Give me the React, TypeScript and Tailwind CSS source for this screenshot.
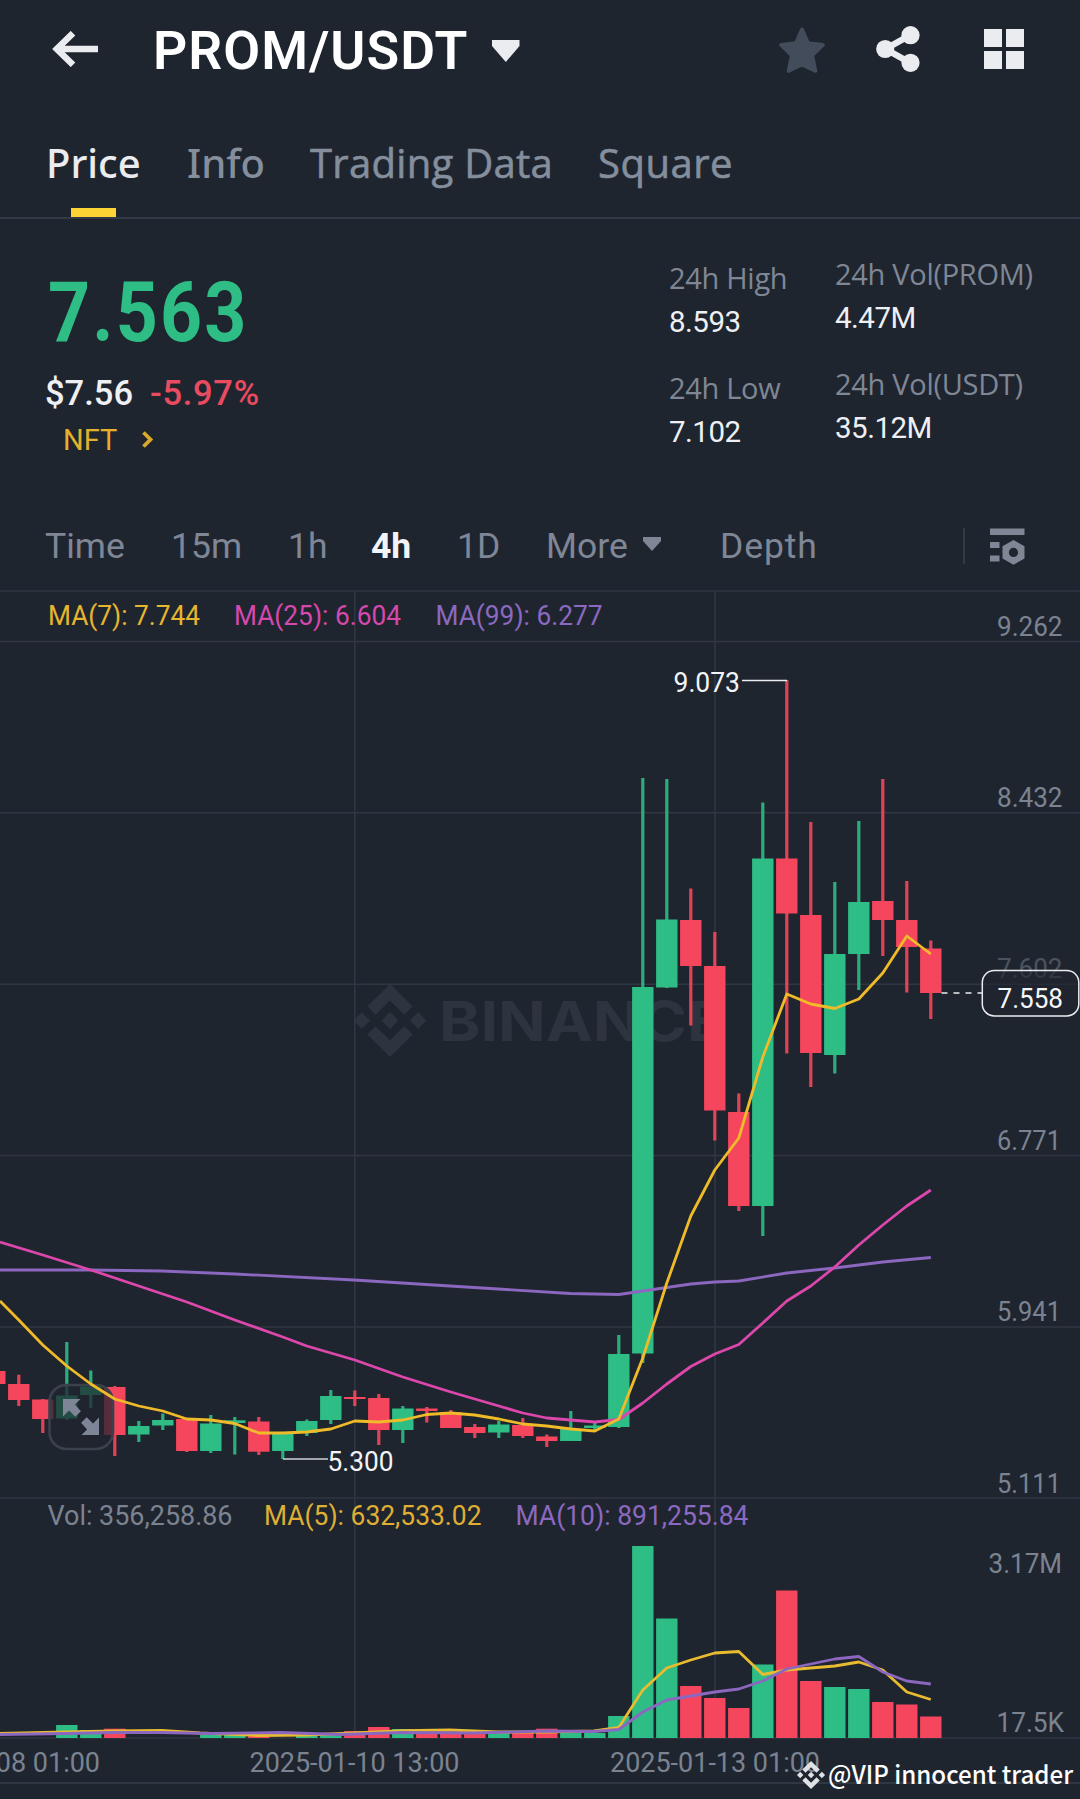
import clsx from "clsx";

type Candle = [number, number, number, number, boolean];

// [high, body top, body bottom, low, rising] in chart pixels, one entry per 4h candle
const CANDLES: Candle[] = [
  [1371, 1371, 1384, 1384, false],
  [1374.7, 1384, 1400, 1406, false],
  [1399, 1399.5, 1419, 1433, false],
  [1342, 1395.5, 1418.5, 1420, true],
  [1370.5, 1386.5, 1395, 1408, true],
  [1386, 1387, 1435, 1456, false],
  [1421, 1426, 1434.5, 1442, true],
  [1413.5, 1420, 1425.5, 1430, true],
  [1418, 1419, 1451, 1452, false],
  [1415, 1423.5, 1451, 1453, true],
  [1417, 1420.3, 1423, 1454.5, true],
  [1417, 1421.5, 1451.7, 1455, false],
  [1433, 1433, 1451, 1459, true],
  [1419.5, 1421, 1433, 1436, true],
  [1390, 1396, 1420, 1424, true],
  [1390.5, 1397, 1399, 1406, false],
  [1394, 1398, 1430, 1445, false],
  [1406, 1408.5, 1430, 1443, true],
  [1407, 1408.5, 1411, 1422.5, false],
  [1410, 1412, 1428, 1428, false],
  [1424, 1427, 1433, 1438, false],
  [1421, 1424.5, 1432.5, 1438, true],
  [1418, 1425, 1436, 1438, false],
  [1434.5, 1436.5, 1441, 1447, false],
  [1411, 1429, 1441, 1441, true],
  [1423, 1425.5, 1428, 1431, true],
  [1335, 1354, 1427, 1428, true],
  [778, 987, 1353.5, 1363, true],
  [779, 919.5, 987.5, 988, true],
  [888.5, 920, 966, 1025.5, false],
  [932, 966, 1110.5, 1140.5, false],
  [1093.5, 1112, 1206, 1211, false],
  [802.5, 858.5, 1206, 1236, true],
  [680, 858.5, 913.5, 1053.5, false],
  [822, 915, 1053, 1087, false],
  [882, 954, 1055, 1073.5, true],
  [821, 902, 954, 990, true],
  [779, 901, 920, 956, false],
  [881, 920, 947, 992.5, false],
  [940.5, 948.5, 993, 1019, false],
];

const VOLUME_TOPS = [
  1738, 1738, 1738, 1725, 1730, 1728.7, 1738, 1738, 1738, 1735, 1735, 1736, 1738, 1735, 1735, 1731, 1727, 1729, 1733,
  1733, 1733, 1733, 1733, 1728.7, 1733, 1733, 1716, 1546, 1618.5, 1686, 1698, 1708, 1664.5, 1590.5, 1681, 1687, 1689,
  1702, 1704.5, 1716.5,
];

const MA7 =
  "0,1301 18.8,1320 42.8,1345 66.8,1366 90.8,1384 114.8,1399 138.8,1406 162.8,1411 186.8,1419 210.8,1420 234.8,1423.5 258.8,1433 282.8,1433 306.8,1432 330.8,1429 354.8,1421 378.8,1422 402.8,1420 426.8,1414.5 450.8,1413 474.8,1415 498.8,1419 522.8,1424 546.8,1426 570.8,1429 594.8,1431 618.8,1419 642.8,1358 666.8,1283 690.8,1216 714.8,1170 738.8,1138 762.8,1057 786.8,994 810.8,1004 834.8,1008.5 858.8,999 882.8,973 906.8,936 930.8,954";
const MA25 =
  "0,1242 42.8,1255 90.8,1270 138.8,1286 186.8,1302 234.8,1320 282.8,1337 306.8,1346 354.8,1360 402.8,1377 450.8,1392 498.8,1406 522.8,1413 546.8,1418 570.8,1420 594.8,1422 618.8,1419.5 642.8,1403 666.8,1384 690.8,1366.5 714.8,1354 738.8,1344.5 762.8,1323 786.8,1301 810.8,1286 834.8,1267 858.8,1245 882.8,1225 906.8,1206 930.8,1190";
const MA99 =
  "0,1270 90,1270 162,1271 235,1274 354,1280 450,1286 570,1293.5 618.8,1294.5 642.8,1291 690.8,1284 714.8,1282 738.8,1281 786.8,1273 834.8,1268 882.8,1262 930.8,1257.5";
const VOL_MA5 =
  "0,1733.5 66,1732 114,1731 162,1730.5 200,1733 258,1735.5 306,1735 354,1733 402,1730.7 450,1730 498,1732 546,1732 594,1731 618.8,1727.5 642.8,1690 666.8,1668 690.8,1660 714.8,1653 738.8,1651.5 762.8,1674.5 786.8,1670 834.8,1666 858.8,1662 882.8,1670 906.8,1692 930.8,1699.5";
const VOL_MA10 =
  "0,1734.5 66,1733.5 114,1732.5 162,1732.5 210,1733.5 280,1732.5 340,1734.5 402,1732.5 474,1733 546,1731 594,1731.5 618.8,1729.5 642.8,1712 666.8,1700 690.8,1696 714.8,1692 738.8,1689 762.8,1681 786.8,1669 834.8,1659 858.8,1656.5 882.8,1672 906.8,1681 930.8,1684";

const GREEN = "#2ebd85";
const RED = "#f6465d";
const STEP = 24;
const centerOf = (i: number) => i * STEP - 5.2;

type LabelProps = { x: number; y: number; w: number; fill: string; children: string };

// Chart text with its left edge at x, its baseline at y and a fixed run length
function Label({ x, y, w, fill, children }: LabelProps) {
  return (
    <text
      x={x - 1.5}
      y={y}
      fill={fill}
      fontSize={27}
      textLength={w + 2.5}
      lengthAdjust="spacingAndGlyphs"
      className="font-[Roboto,sans-serif]"
    >
      {children}
    </text>
  );
}

function BinanceMark() {
  return (
    <path d="M7.3 10.1 12 5.4l4.7 4.7 2.75-2.75L12 0 4.55 7.35zM0 12l2.73-2.73L5.46 12l-2.73 2.73zM7.3 13.9 12 18.6l4.7-4.7 2.75 2.74L12 24l-7.45-7.36zM18.54 12l2.73-2.73L24 12l-2.73 2.73zM14.77 12 12 9.22 9.23 12 12 14.78z" />
  );
}

function PriceChart() {
  return (
    <svg width="1080" height="1207" viewBox="0 592 1080 1207" className="block shrink-0">
      <g fill="#2e343f">
        <g transform="translate(353.5 984) scale(3.04)">
          <BinanceMark />
        </g>
        <text
          x="439"
          y="1040.5"
          fontSize="55.5"
          fontWeight="700"
          textLength="286"
          lengthAdjust="spacingAndGlyphs"
          className="font-[Inter,sans-serif]"
        >
          BINANCE
        </text>
      </g>

      <g stroke="#303743" strokeWidth="1.6">
        {[641.5, 812.8, 984.3, 1155.5, 1327, 1498].map((y) => (
          <line key={y} x1="0" x2="1080" y1={y} y2={y} />
        ))}
        <line x1="354.8" x2="354.8" y1="592" y2="1738" />
        <line x1="715" x2="715" y1="592" y2="1738" />
        <line x1="0" x2="1080" y1="1738" y2="1738" />
        <line x1="0" x2="1080" y1="1783" y2="1783" strokeWidth="2" />
      </g>

      {CANDLES.map(([high, top, bottom, low, up], i) => (
        <g key={i} fill={up ? GREEN : RED}>
          <rect x={centerOf(i) - 1.6} y={high} width="3.2" height={low - high} opacity="0.9" />
          <rect x={centerOf(i) - 10.7} y={top} width="21.4" height={bottom - top} />
          <rect x={centerOf(i) - 10.7} y={VOLUME_TOPS[i]} width="21.4" height={1738 - VOLUME_TOPS[i]} />
        </g>
      ))}

      {/* fullscreen button */}
      <rect x="49.5" y="1385" width="63.5" height="64" rx="17" fill="#1f252f" fillOpacity="0.74" stroke="#3a414d" strokeWidth="2.6" />
      <g fill="#7d8596">
        <path d="M63 1399h17.5l-5.6 5.6 6 6.6-5.6 5.6-6.3-6.4-6 6z" />
        <path d="M99 1435H81.5l5.6-5.6-6-6.6 5.6-5.6 6.3 6.4 6-6z" />
      </g>

      <g fill="none" strokeWidth="2.8" strokeLinejoin="round">
        <polyline points={MA99} stroke="#8b67c0" />
        <polyline points={MA25} stroke="#dc47ab" />
        <polyline points={MA7} stroke="#f0bb28" />
        <polyline points={VOL_MA5} stroke="#e8bb30" />
        <polyline points={VOL_MA10} stroke="#8b67c0" />
      </g>

      <Label x={49.5} y={625} w={149.5} fill="#e7b62f">MA(7): 7.744</Label>
      <Label x={235.5} y={625} w={164.5} fill="#d548ac">MA(25): 6.604</Label>
      <Label x={437} y={625} w={164.5} fill="#8c69c0">MA(99): 6.277</Label>

      <Label x={998.5} y={636} w={63} fill="#7b8391">9.262</Label>
      <Label x={998.5} y={807} w={63} fill="#7b8391">8.432</Label>
      <Label x={998.5} y={978} w={63} fill="#4c535f">7.602</Label>
      <Label x={998.5} y={1149.5} w={61.5} fill="#7b8391">6.771</Label>
      <Label x={998.5} y={1321} w={61.5} fill="#7b8391">5.941</Label>
      <Label x={998.5} y={1492.5} w={61.5} fill="#7b8391">5.111</Label>
      <Label x={990} y={1573} w={71} fill="#7b8391">3.17M</Label>
      <Label x={998} y={1732} w={65} fill="#7b8391">17.5K</Label>

      <line x1="742" x2="787" y1="680.5" y2="680.5" stroke="#eaecef" strokeWidth="1.5" />
      <Label x={675} y={691.5} w={64} fill="#f3f4f6">9.073</Label>
      <line x1="283" x2="328" y1="1459" y2="1459" stroke="#cfd3d6" strokeWidth="1.5" />
      <Label x={329} y={1470.5} w={63.5} fill="#f3f4f6">5.300</Label>

      <line x1="941.5" x2="982" y1="993" y2="993" stroke="#eaecef" strokeWidth="1.6" strokeDasharray="6 6" />
      <rect x="982.3" y="970.4" width="96.5" height="45.5" rx="12" fill="#1f252f" fillOpacity="0.6" stroke="#eaecef" strokeWidth="1.5" />
      <Label x={999} y={1007.5} w={63} fill="#f6f7f9">7.558</Label>

      <Label x={49} y={1525} w={182.5} fill="#7b8391">Vol: 356,258.86</Label>
      <Label x={265.5} y={1525} w={215} fill="#dfae33">MA(5): 632,533.02</Label>
      <Label x={517} y={1525} w={230.5} fill="#8c69c0">MA(10): 891,255.84</Label>

      <Label x={-108.5} y={1771.5} w={207.5} fill="#7b8391">2025-01-08 01:00</Label>
      <Label x={251} y={1771.5} w={207.5} fill="#7b8391">2025-01-10 13:00</Label>
      <Label x={611.5} y={1771.5} w={207.5} fill="#7b8391">2025-01-13 01:00</Label>

      <g transform="translate(797 1761) scale(1.17)" fill="#dfe1e4">
        <BinanceMark />
      </g>
      <text
        x="828"
        y="1784"
        fontSize="25"
        fontWeight="500"
        fill="#ffffff"
        textLength="245"
        lengthAdjust="spacingAndGlyphs"
        className="font-['Noto_Sans_CJK_SC',sans-serif]"
      >
        @VIP innocent trader
      </text>
    </svg>
  );
}

type StatProps = { label: string; value: string; className?: string };

function Stat({ label, value, className }: StatProps) {
  return (
    <div className={clsx("flex flex-col items-start gap-2 leading-9 whitespace-nowrap", className)}>
      <span className="font-['Open_Sans',sans-serif] text-[29px] tracking-[-0.3px] text-[#7f8795]">{label}</span>
      <span className="text-[29.5px] tracking-[-0.5px] text-[#eef0f4]">{value}</span>
    </div>
  );
}

function Header() {
  return (
    <header className="flex h-[98px] shrink-0 items-center">
      <svg width="46" height="36" viewBox="0 0 46 36" fill="none" stroke="#eaecef" strokeWidth="6.5" className="ml-[52px] shrink-0">
        <path d="M4 18h42M21 2.200 4.800 18 21 33.800" />
      </svg>
      <h1 className="ml-[55px] w-[339px] pt-1 text-[53.5px] leading-[60px] font-semibold tracking-[1px] text-white">PROM/USDT</h1>
      <svg width="28" height="22" viewBox="0 0 28 22" fill="#eaecef" className="mt-1 shrink-0">
        <path d="M0 0h27.500v6L13.800 22 0 6z" />
      </svg>
      <svg
        width="46"
        height="46"
        viewBox="0 0 46 46"
        fill="#434c5a"
        stroke="#434c5a"
        strokeWidth="4"
        strokeLinejoin="round"
        className="mt-px ml-[259px] shrink-0"
      >
        <path d="m23 2.500 6 13.700 14.800 1.700-10.700 10.500 3.200 15.400L23 37.500 9.700 43.800l3.200-15.400L2.200 17.900 17 16.200z" />
      </svg>
      <svg width="44" height="46" viewBox="0 0 44 46" fill="#eaecef" className="ml-[51px] shrink-0">
        <path d="M34.500 9 9.500 23l25 14" fill="none" stroke="#eaecef" strokeWidth="6.500" />
        <circle cx="9.200" cy="23" r="9.100" />
        <circle cx="34.500" cy="9.200" r="9.100" />
        <circle cx="34.500" cy="36.800" r="9.100" />
      </svg>
      <div className="ml-[64px] grid w-10 grid-cols-2 gap-[4.5px]">
        <span className="h-[17.7px] bg-[#eaecef]" />
        <span className="h-[17.7px] bg-[#eaecef]" />
        <span className="h-[17.7px] bg-[#eaecef]" />
        <span className="h-[17.7px] bg-[#eaecef]" />
      </div>
    </header>
  );
}

function Tabs() {
  return (
    <nav className="flex h-[121px] shrink-0 items-stretch border-b-2 border-[#333a46] pt-[37px] pl-[46px] text-[40px] leading-[56px] font-medium whitespace-nowrap text-[#848e9c]">
      <div className="flex w-[141px] flex-col items-start justify-between font-['Noto_Sans',sans-serif] text-[#eaecef]">
        <span>Price</span>
        <span className="ml-[25px] h-[9px] w-[45px] bg-[#fcd535]" />
      </div>
      <div className="w-[123px] font-['Noto_Sans',sans-serif]">Info</div>
      <div className="w-[288px] font-['Open_Sans',sans-serif] tracking-[0.3px] [-webkit-text-stroke:0.6px_#848e9c]">
        Trading Data
      </div>
      <div className="font-['Open_Sans',sans-serif] tracking-[0.5px] [-webkit-text-stroke:0.6px_#848e9c]">Square</div>
    </nav>
  );
}

function Summary() {
  return (
    <section className="flex h-[287px] shrink-0 items-start">
      <div className="flex w-[669px] flex-col items-start pt-[54px] pl-[46px]">
        <span className="ml-0.5 origin-left scale-x-[0.89] text-[82.5px] leading-[80px] font-bold tracking-[2.4px] text-[#2ebd85]">
          7.563
        </span>
        <div className="mt-5 flex text-[34.5px] leading-10 font-medium">
          <span className="-ml-px w-[105px] text-[#eef0f4]">$7.56</span>
          <span className="tracking-[0.7px] text-[#e94b60]">-5.97%</span>
        </div>
        <div className="mt-[9px] flex items-center pl-[17px] text-[29px] leading-9 text-[#e3b12c]">
          <span className="w-[79px]">NFT</span>
          <svg width="12" height="17" viewBox="0 0 12 17" fill="none" stroke="#d9a92c" strokeWidth="3.8" className="-mt-0.5">
            <path d="m1.500 1.500 7 7-7 7" />
          </svg>
        </div>
      </div>
      <div className="flex w-[166px] flex-col gap-[30px] pt-[41px]">
        <Stat label="24h High" value="8.593" />
        <Stat label="24h Low" value="7.102" />
      </div>
      <div className="flex flex-col gap-[30px] pt-[37px]">
        <Stat label="24h Vol(PROM)" value="4.47M" />
        <Stat label="24h Vol(USDT)" value="35.12M" />
      </div>
    </section>
  );
}

function Timeframes() {
  return (
    <div className="flex h-[86px] shrink-0 items-center border-b-2 border-[#2a313c] pb-0.5 pl-[45px] text-[35.5px] leading-none whitespace-nowrap text-[#7f8796]">
      <span className="w-[126px]">Time</span>
      <span className="w-[117px]">15m</span>
      <span className="w-[83px]">1h</span>
      <span className="w-[86px] font-bold text-[#f3f4f7]">4h</span>
      <span className="w-[89px]">1D</span>
      <span className="w-[97px]">More</span>
      <svg width="18" height="14" viewBox="0 0 18 14" fill="#7f8796" className="mb-1.5 shrink-0">
        <path d="M0 0h18v4L9 14 0 4z" />
      </svg>
      <span className="ml-[59px] w-[243px] tracking-[0.9px]">Depth</span>
      <span className="mb-0.5 h-9 w-[2px] bg-[#333a46]" />
      <svg width="35" height="37" viewBox="0 0 35 37" className="mb-0.5 ml-[25px] shrink-0" fill="#7f8796">
        <path d="M0 0.500h34.500v6.500H0zM0 14h9.500v6H0zM0 27.500h9.500v6H0z" />
        <path
          fillRule="evenodd"
          d="m23.500 12 11 6.200v12.300l-11 6.200-11-6.200V18.200zm0 7.800a4.600 4.600 0 1 0 0 9.200 4.600 4.600 0 0 0 0-9.200z"
        />
      </svg>
    </div>
  );
}

export default function App() {
  return (
    <div className="flex h-[1799px] w-[1080px] flex-col overflow-hidden bg-[#1f252f] font-[Roboto,sans-serif]">
      <Header />
      <Tabs />
      <Summary />
      <Timeframes />
      <PriceChart />
    </div>
  );
}
